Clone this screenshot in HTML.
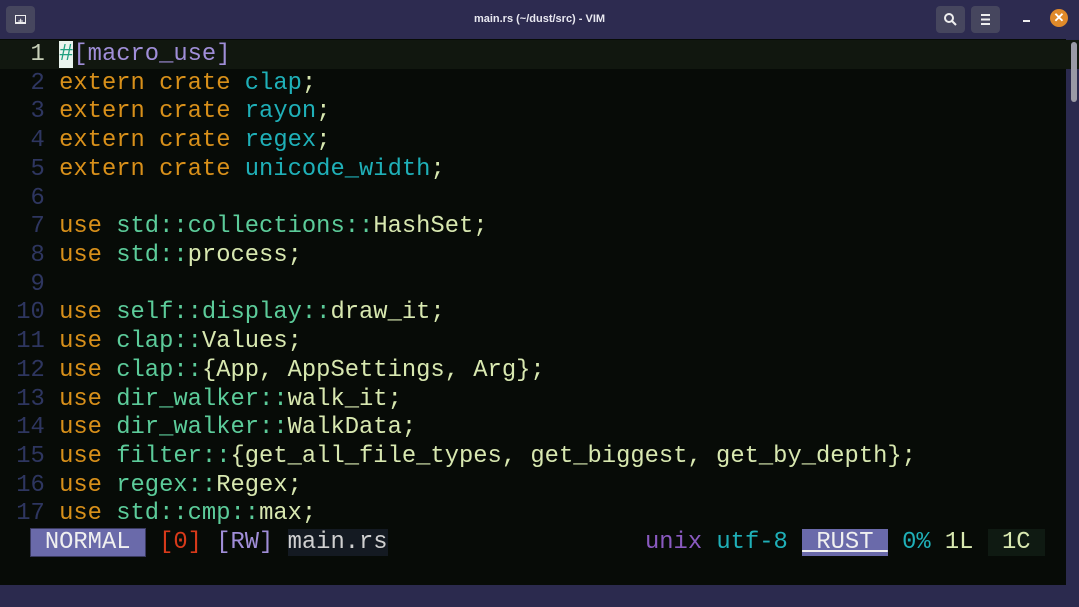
<!DOCTYPE html>
<html><head><meta charset="utf-8"><style>
*{margin:0;padding:0;box-sizing:border-box}
body{width:1079px;height:607px;background:#2b2a4e;position:relative;overflow:hidden;font-family:"Liberation Mono",monospace}
.title{position:absolute;left:0;top:0;width:1079px;height:39px;background:#2d2b50;color:#e8e8f0;font:bold 11px "Liberation Sans",sans-serif;text-align:center;line-height:38px}
.btn{position:absolute;top:6px;width:29px;height:27px;background:#46465e;border-radius:4px}
.term{position:absolute;left:0;top:39px;width:1066px;height:546px;background:#070b07}
.cur{position:absolute;left:0;top:1px;width:1079px;height:29px;background:#11170f}
.l{position:absolute;left:2px;height:29px;font-size:23.8px;line-height:29px;white-space:pre;color:#d8e8b0}
.n{color:#2e3660}.n1{color:#c8d0b8}
.k{color:#d8901a}.c{color:#1fb0b8}.p{color:#5ccc9a}.i{color:#d8e8b0}.m{color:#a08ed8}
.sb{position:absolute;left:1071px;top:42px;width:6px;height:60px;background:#9a9aa6;border-radius:3px}
</style></head><body>
<div class="title">main.rs (~/dust/src) - VIM</div>
<div class="btn" style="left:6px;top:6px"><div style="position:absolute;left:9px;top:9px;width:11px;height:9px;border:1.5px solid #eee;border-bottom-width:2px"></div><div style="position:absolute;left:12px;top:12px;color:#eee;font:bold 9px sans-serif;line-height:6px">+</div></div>
<div class="btn" style="left:936px"><svg width="29" height="27"><circle cx="13" cy="12" r="4" fill="none" stroke="#eee" stroke-width="2"/><line x1="16" y1="15" x2="20" y2="19" stroke="#eee" stroke-width="2"/></svg></div>
<div class="btn" style="left:971px"><svg width="29" height="27"><path d="M10 9h9M10 13.5h9M10 18h9" stroke="#eee" stroke-width="2"/></svg></div>
<div style="position:absolute;left:1023px;top:20px;width:7px;height:2px;background:#eee"></div>
<div style="position:absolute;left:1050px;top:9px;width:18px;height:18px;border-radius:50%;background:#e08a2a;color:#fff;font:bold 13px sans-serif;text-align:center;line-height:18px">✕</div>
<div class="term">
<div class="cur"></div>
<div class="l" style="top:1px"><span class="n1">  1 </span><span style="background:#eaf4ee;color:#20a080">#</span><span class="m">[macro_use]</span></div>
<div class="l" style="top:30px"><span class="n">  2 </span><span class="k">extern crate </span><span class="c">clap</span>;</div>
<div class="l" style="top:58px"><span class="n">  3 </span><span class="k">extern crate </span><span class="c">rayon</span>;</div>
<div class="l" style="top:87px"><span class="n">  4 </span><span class="k">extern crate </span><span class="c">regex</span>;</div>
<div class="l" style="top:116px"><span class="n">  5 </span><span class="k">extern crate </span><span class="c">unicode_width</span>;</div>
<div class="l" style="top:145px"><span class="n">  6 </span></div>
<div class="l" style="top:173px"><span class="n">  7 </span><span class="k">use </span><span class="p">std::collections::</span>HashSet;</div>
<div class="l" style="top:202px"><span class="n">  8 </span><span class="k">use </span><span class="p">std::</span>process;</div>
<div class="l" style="top:231px"><span class="n">  9 </span></div>
<div class="l" style="top:259px"><span class="n"> 10 </span><span class="k">use </span><span class="p">self::display::</span>draw_it;</div>
<div class="l" style="top:288px"><span class="n"> 11 </span><span class="k">use </span><span class="p">clap::</span>Values;</div>
<div class="l" style="top:317px"><span class="n"> 12 </span><span class="k">use </span><span class="p">clap::</span>{App, AppSettings, Arg};</div>
<div class="l" style="top:346px"><span class="n"> 13 </span><span class="k">use </span><span class="p">dir_walker::</span>walk_it;</div>
<div class="l" style="top:374px"><span class="n"> 14 </span><span class="k">use </span><span class="p">dir_walker::</span>WalkData;</div>
<div class="l" style="top:403px"><span class="n"> 15 </span><span class="k">use </span><span class="p">filter::</span>{get_all_file_types, get_biggest, get_by_depth};</div>
<div class="l" style="top:432px"><span class="n"> 16 </span><span class="k">use </span><span class="p">regex::</span>Regex;</div>
<div class="l" style="top:460px"><span class="n"> 17 </span><span class="k">use </span><span class="p">std::cmp::</span>max;</div>
<div class="l" style="top:489px;left:2px"><span>  </span><span style="background:#6a6aaa;color:#f0f0f0;outline:1px solid #3a3a60"> NORMAL </span> <span style="color:#d83a1a">[0]</span> <span class="m">[RW]</span> <span style="background:#141a22;color:#d0d0d0">main.rs</span></div>
<div class="l" style="top:489px;left:645px"><span style="color:#8a5ac0">unix</span> <span class="c">utf-8</span> <span style="background:#6a6aaa;color:#f0f0f0;text-decoration:underline"> RUST </span> <span class="c">0%</span> <span class="i">1L</span> <span style="background:#0f1a12" class="i"> 1C </span></div>
</div>
<div class="sb"></div>
</body></html>
